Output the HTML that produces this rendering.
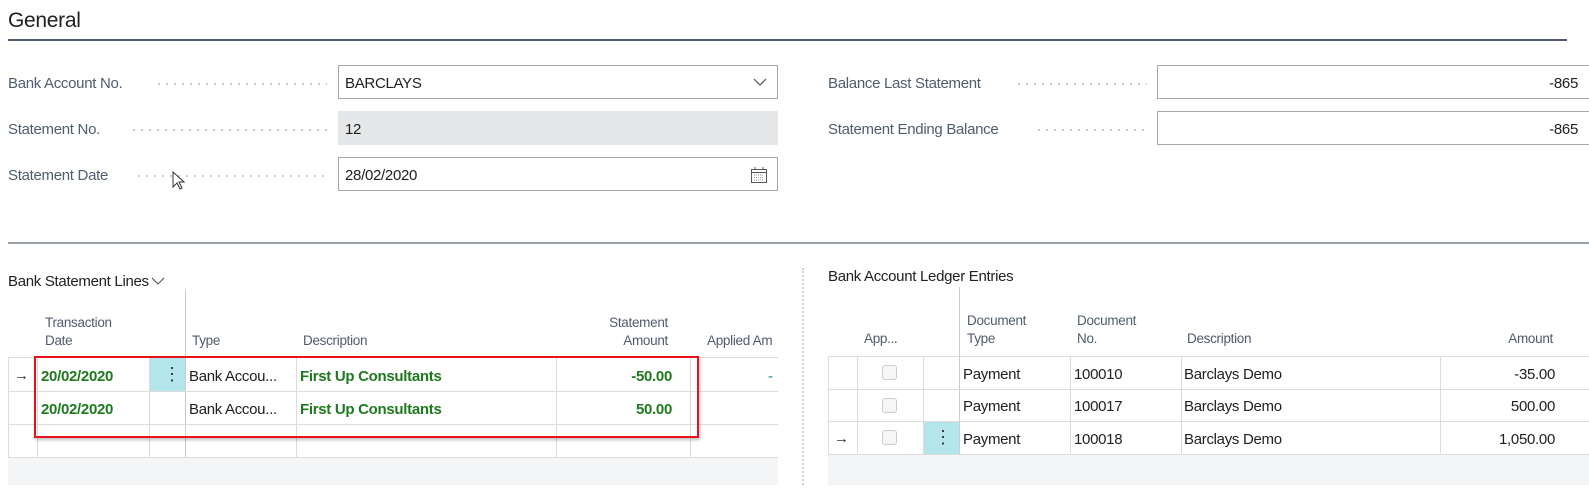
<!DOCTYPE html>
<html><head><meta charset="utf-8"><style>
*{box-sizing:border-box;margin:0;padding:0}
body{width:1589px;height:492px;overflow:hidden;background:#fff;font-family:"Liberation Sans",sans-serif;color:#212121;position:relative;font-size:15px;letter-spacing:-0.3px}
.a{position:absolute;white-space:nowrap}
.lbl{color:#505c6d;font-size:15px}
.dots{position:absolute;height:2px;background:radial-gradient(circle,#b8b8b8 0.8px,transparent 1px) 0 0/8px 2px repeat-x}
.inp{position:absolute;border:1px solid #a8a8a8;background:#fff;height:34px;padding:9px 6px;font-size:15px}
.hd{color:#505c6d;font-size:13.5px;line-height:18px}
.vl{position:absolute;width:1px;background:#dcdcdc}
.hl{position:absolute;height:1px;background:#dcdcdc}
.g{color:#1e7a1e;font-weight:bold;font-size:15px}
</style></head><body>
<div class="a" style="left:8px;top:9px;font-size:21px;color:#212121">General</div>
<div class="a" style="left:8px;top:39px;width:1559px;height:2px;background:#505c6d"></div>

<div class="a lbl" style="left:8px;top:75px">Bank Account No.</div><div class="dots" style="left:155px;top:83px;width:172px"></div>
<div class="inp" style="left:338px;top:65px;width:440px">BARCLAYS<svg style="position:absolute;right:10px;top:12px" width="14" height="9"><path d="M1 1l6 6 6-6" fill="none" stroke="#555" stroke-width="1.2"/></svg></div>
<div class="a lbl" style="left:8px;top:121px">Statement No.</div><div class="dots" style="left:130px;top:129px;width:197px"></div>
<div class="inp" style="left:338px;top:111px;width:440px;background:#e6e7e9;border-color:#e6e7e9">12</div>
<div class="a lbl" style="left:8px;top:167px">Statement Date</div><div class="dots" style="left:135px;top:175px;width:192px"></div>
<div class="inp" style="left:338px;top:157px;width:440px">28/02/2020<svg style="position:absolute;right:9px;top:8px" width="18" height="18"><rect x="1.5" y="3.5" width="15" height="13" fill="none" stroke="#555"/><line x1="1.5" y1="6.5" x2="16.5" y2="6.5" stroke="#555"/><line x1="5" y1="1" x2="5" y2="4" stroke="#555"/><line x1="13" y1="1" x2="13" y2="4" stroke="#555"/><path d="M4 9h10M4 11.5h10M4 14h10" stroke="#999" stroke-dasharray="1 1"/></svg></div>
<svg class="a" style="left:172px;top:171px" width="14" height="20"><path d="M1 1v15l4-4 3 6 2-1-3-6h5z" fill="#fff" stroke="#333"/></svg>

<div class="a lbl" style="left:828px;top:75px">Balance Last Statement</div><div class="dots" style="left:1015px;top:83px;width:132px"></div>
<div class="inp" style="left:1157px;top:65px;width:440px;text-align:right;padding-right:18px">-865</div>
<div class="a lbl" style="left:828px;top:121px">Statement Ending Balance</div><div class="dots" style="left:1035px;top:129px;width:112px"></div>
<div class="inp" style="left:1157px;top:111px;width:440px;text-align:right;padding-right:18px">-865</div>

<div class="a" style="left:8px;top:242px;width:1581px;height:2px;background:#9aa0a8"></div>

<!-- left grid -->
<div class="a" style="left:8px;top:273px;font-size:15px;color:#212121">Bank Statement Lines<svg width="14" height="9" style="margin-left:2px"><path d="M1 1l6 6 6-6" fill="none" stroke="#555" stroke-width="1.1"/></svg></div>
<div class="vl" style="left:185px;top:290px;height:167px;background:#ccc"></div>
<div class="a hd" style="left:45px;top:314px">Transaction<br>Date</div>
<div class="a hd" style="left:192px;top:332px">Type</div>
<div class="a hd" style="left:303px;top:332px">Description</div>
<div class="a hd" style="left:580px;top:314px;text-align:right;width:88px">Statement<br>Amount</div>
<div class="a hd" style="left:707px;top:332px">Applied Am</div>
<div class="hl" style="left:8px;top:357px;width:770px"></div>
<div class="hl" style="left:8px;top:391px;width:770px"></div>
<div class="hl" style="left:8px;top:424px;width:770px"></div>
<div class="hl" style="left:8px;top:457px;width:770px"></div>
<div class="vl" style="left:8px;top:357px;height:100px"></div>
<div class="vl" style="left:37px;top:357px;height:100px"></div>
<div class="vl" style="left:149px;top:357px;height:100px"></div>
<div class="vl" style="left:296px;top:357px;height:100px"></div>
<div class="vl" style="left:556px;top:357px;height:100px"></div>
<div class="vl" style="left:690px;top:357px;height:100px"></div>
<div class="a" style="left:150px;top:358px;width:35px;height:33px;background:#b2e6ea"></div>
<div class="a" style="left:163px;top:364px;font-size:18px;color:#333">⋮</div>
<div class="a" style="left:14px;top:367px;color:#333">→</div>
<div class="a g" style="left:41px;top:368px">20/02/2020</div>
<div class="a" style="left:189px;top:368px">Bank Accou...</div>
<div class="a g" style="left:300px;top:368px">First Up Consultants</div>
<div class="a g" style="left:560px;top:368px;width:112px;text-align:right">-50.00</div>
<div class="a" style="left:768px;top:368px;color:#2a7f8f">-</div>
<div class="a g" style="left:41px;top:401px">20/02/2020</div>
<div class="a" style="left:189px;top:401px">Bank Accou...</div>
<div class="a g" style="left:300px;top:401px">First Up Consultants</div>
<div class="a g" style="left:560px;top:401px;width:112px;text-align:right">50.00</div>
<div class="a" style="left:8px;top:458px;width:770px;height:27px;background:#f4f5f7"></div>
<div class="a" style="left:34px;top:356px;width:665px;height:82px;border:2px solid #e8121b;box-shadow:1px 2px 3px rgba(0,0,0,.25)"></div>

<div class="a" style="left:802px;top:268px;width:0;height:217px;border-left:2px dotted #d0d0d0"></div>

<!-- right grid -->
<div class="a" style="left:828px;top:268px;font-size:15px">Bank Account Ledger Entries</div>
<div class="vl" style="left:959px;top:287px;height:167px;background:#ccc"></div>
<div class="a hd" style="left:864px;top:330px">App...</div>
<div class="a hd" style="left:967px;top:312px">Document<br>Type</div>
<div class="a hd" style="left:1077px;top:312px">Document<br>No.</div>
<div class="a hd" style="left:1187px;top:330px">Description</div>
<div class="a hd" style="left:1480px;top:330px;width:73px;text-align:right">Amount</div>
<div class="hl" style="left:828px;top:356px;width:761px"></div>
<div class="hl" style="left:828px;top:389px;width:761px"></div>
<div class="hl" style="left:828px;top:421px;width:761px"></div>
<div class="hl" style="left:828px;top:454px;width:761px"></div>
<div class="vl" style="left:828px;top:356px;height:98px"></div>
<div class="vl" style="left:857px;top:356px;height:98px"></div>
<div class="vl" style="left:923px;top:356px;height:98px"></div>
<div class="vl" style="left:1070px;top:356px;height:98px"></div>
<div class="vl" style="left:1181px;top:356px;height:98px"></div>
<div class="vl" style="left:1440px;top:356px;height:98px"></div>
<div class="a" style="left:924px;top:422px;width:35px;height:32px;background:#b2e6ea"></div>
<div class="a" style="left:934px;top:427px;font-size:18px;color:#333">⋮</div>
<div class="a" style="left:834px;top:430px;color:#333">→</div>
<div class="a" style="left:882px;top:365px;width:15px;height:15px;border:1px solid #ccc;border-radius:3px;background:#f6f6f6"></div>
<div class="a" style="left:882px;top:398px;width:15px;height:15px;border:1px solid #ccc;border-radius:3px;background:#f6f6f6"></div>
<div class="a" style="left:882px;top:430px;width:15px;height:15px;border:1px solid #ccc;border-radius:3px;background:#f6f6f6"></div>
<div class="a" style="left:963px;top:366px">Payment</div><div class="a" style="left:1074px;top:366px">100010</div><div class="a" style="left:1184px;top:366px">Barclays Demo</div><div class="a" style="left:1440px;top:366px;width:115px;text-align:right">-35.00</div>
<div class="a" style="left:963px;top:398px">Payment</div><div class="a" style="left:1074px;top:398px">100017</div><div class="a" style="left:1184px;top:398px">Barclays Demo</div><div class="a" style="left:1440px;top:398px;width:115px;text-align:right">500.00</div>
<div class="a" style="left:963px;top:431px">Payment</div><div class="a" style="left:1074px;top:431px">100018</div><div class="a" style="left:1184px;top:431px">Barclays Demo</div><div class="a" style="left:1440px;top:431px;width:115px;text-align:right">1,050.00</div>
<div class="a" style="left:828px;top:455px;width:761px;height:30px;background:#f4f5f7"></div>
</body></html>
